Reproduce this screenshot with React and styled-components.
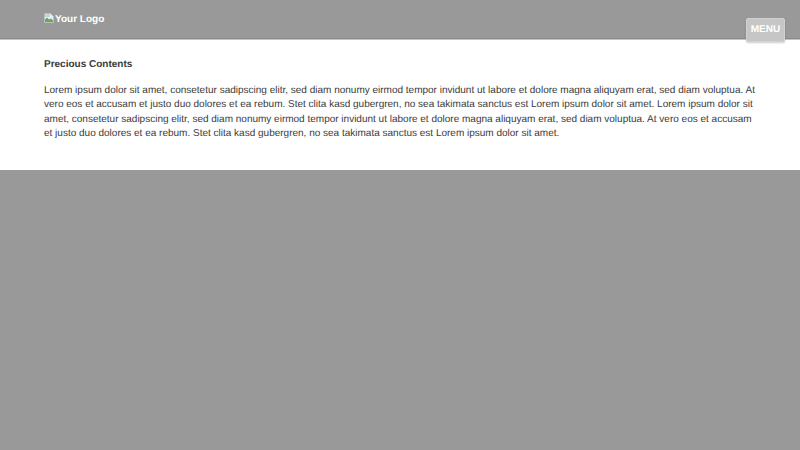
import React from "react"
import styled, { createGlobalStyle } from "styled-components"

const GlobalStyle = createGlobalStyle`
  html, body {
    margin: 0;
    padding: 0;
    height: 100%;
    background: #999;
    font-family: "Liberation Sans", Arial, sans-serif;
    font-size: 10px;
    line-height: 14.5px;
    color: #3a3a3a;
    text-rendering: geometricPrecision;
  }
`
const Header = styled.header`
  position: relative;
  height: 40px;
  padding: 13px 44px 0;
  box-sizing: border-box;
  background: #999;
  border-bottom: 1px solid #c4c4c4;
  box-shadow: inset 0 -1px 0 #8c8c8c;
`
const Logo = styled.a`
  display: inline-flex;
  align-items: flex-start;
  color: #fff;
  font-weight: bold;
  font-size: 10px;
  line-height: 13px;
`
const BrokenImage = styled.svg`
  display: block;
  width: 10px;
  height: 10px;
  margin-right: 1px;
`
const MenuButton = styled.button`
  position: absolute;
  top: 18px;
  right: 15px;
  width: 39px;
  height: 24px;
  padding: 0 0 1px;
  border: 1px solid #d2d2d2;
  border-radius: 2px;
  background: #c6c6c6;
  color: #fff;
  font: bold 10px "Liberation Sans", Arial, sans-serif;
  text-rendering: geometricPrecision;
  box-shadow: 0 1px 2px rgba(0, 0, 0, 0.2);
`
const Main = styled.main`
  height: 130px;
  padding: 18px 44px 0;
  box-sizing: border-box;
  background: #fff;
`
const Title = styled.h1`
  margin: 0 0 12px;
  font-size: 10px;
  line-height: 14px;
  font-weight: bold;
`
const Body = styled.p`
  margin: 0;
  font-size: 10px;
  line-height: 14.4px;
  width: 712px;
`

const App = () => (
  <>
    <GlobalStyle />
    <Header>
      <Logo>
        <BrokenImage viewBox="0 0 10 10">
          <path d="M0.5 0.5h6l3 3v6h-9z" fill="#e8eef4" stroke="#b5bcc4" strokeWidth="0.6" />
          <path d="M1 1h5v3H1z" fill="#bcd6ee" />
          <path d="M1 6.5l2-2 2 2 2-1 2 2V9H1z" fill="#6aa84f" />
        </BrokenImage>
        <span>Your Logo</span>
      </Logo>
      <MenuButton>MENU</MenuButton>
    </Header>
    <Main>
      <Title>Precious Contents</Title>
      <Body>
        Lorem ipsum dolor sit amet, consetetur sadipscing elitr, sed diam nonumy eirmod tempor invidunt ut labore et dolore magna aliquyam erat, sed diam voluptua. At vero eos et accusam et justo duo dolores et ea rebum. Stet clita kasd gubergren, no sea takimata sanctus est Lorem ipsum dolor sit amet. Lorem ipsum dolor sit amet, consetetur sadipscing elitr, sed diam nonumy eirmod tempor invidunt ut labore et dolore magna aliquyam erat, sed diam voluptua. At vero eos et accusam et justo duo dolores et ea rebum. Stet clita kasd gubergren, no sea takimata sanctus est Lorem ipsum dolor sit amet.
      </Body>
    </Main>
  </>
)

export default App
